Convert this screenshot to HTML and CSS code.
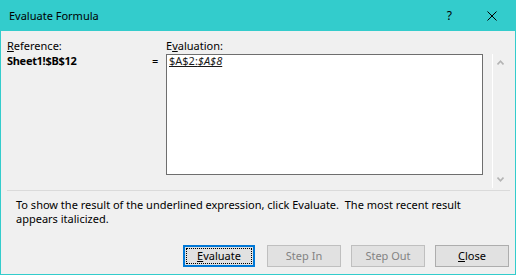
FILE: index.html
```html
<!DOCTYPE html>
<html>
<head>
<meta charset="utf-8">
<title>Evaluate Formula</title>
<link rel="stylesheet" href="styles.css">
</head>
<body>
<div class="window">
  <div class="titlebar">
    <span class="title">Evaluate Formula</span>
    <span class="help">?</span>
    <svg class="close" width="10" height="10" viewBox="0 0 10 10"><path d="M0.5 0.5 L9.5 9.5 M9.5 0.5 L0.5 9.5" stroke="#000" stroke-width="1" fill="none"/></svg>
  </div>
  <div class="content">
    <div class="top">
      <div class="refcol">
        <div class="label"><u>R</u>eference:</div>
        <div class="refval">Sheet1!$B$12</div>
      </div>
      <div class="eq">=</div>
      <div class="evalcol">
        <div class="label">E<u>v</u>aluation:</div>
        <div class="evalbox"><span class="expr">$A$2:<i>$A$8</i></span></div>
      </div>
      <div class="scroll">
        <svg class="arrow" width="7" height="5" viewBox="0 0 7 5"><path d="M0.5 4.5 L3.5 1.2 L6.5 4.5" stroke="#b4b4b4" stroke-width="1.6" fill="none"/></svg>
        <svg class="arrow" width="7" height="5" viewBox="0 0 7 5"><path d="M0.5 0.5 L3.5 3.8 L6.5 0.5" stroke="#b4b4b4" stroke-width="1.6" fill="none"/></svg>
      </div>
    </div>
    <div class="sep"></div>
    <p class="hint">To show the result of the underlined expression, click Evaluate.&nbsp; The most recent result<br>appears italicized.</p>
    <div class="buttons">
      <button class="btn default"><u>E</u>valuate</button>
      <button class="btn disabled">Step In</button>
      <button class="btn disabled">Step Out</button>
      <button class="btn"><u>C</u>lose</button>
    </div>
  </div>
</div>
</body>
</html>
```

FILE: styles.css
```css
html, body {
  margin: 0;
  padding: 0;
  background: #ffffff;
}
body {
  font-family: "Noto Sans", "Open Sans", sans-serif;
  font-size: 11px;
  color: #000;
}
.window {
  width: 516px;
  height: 275px;
  box-sizing: border-box;
  border: 1px solid #33cccc;
  border-top: none;
  background: #f0f0f0;
  display: flex;
  flex-direction: column;
}
.titlebar {
  height: 31px;
  margin: 0 -1px;
  background: #33cccc;
  display: flex;
  align-items: center;
  padding-left: 9px;
  padding-right: 19px;
  line-height: 31px;
}
.title {
  flex: 1;
  font-size: 11px;
}
.help {
  font-size: 12px;
  margin-right: 35px;
  line-height: 31px;
}
.close {
  display: block;
  margin-top: 0px;
}
.content {
  flex: 1;
  display: flex;
  flex-direction: column;
}
.top {
  display: flex;
  align-items: flex-start;
  padding-top: 7px;
  padding-left: 6px;
  padding-right: 5px;
  height: 150px;
}
.label {
  line-height: 16px;
  white-space: nowrap;
}
.refcol {
  width: 145px;
}
.refval {
  font-weight: 700;
  line-height: 13px;
  letter-spacing: -0.3px;
  white-space: nowrap;
}
.eq {
  width: 14px;
  padding-top: 16px;
  line-height: 13px;
}
.evalcol {
  width: 317px;
}
.evalbox {
  box-sizing: border-box;
  height: 121px;
  border: 1px solid #6e6e6e;
  background: #ffffff;
  padding-left: 2px;
  line-height: 12px;
  color: #1a1a1a;
}
.expr {
  text-decoration: underline;
}
.scroll {
  box-sizing: border-box;
  margin-top: 16px;
  margin-left: 9px;
  width: 17px;
  height: 134px;
  border-left: 1px solid #ffffff;
  display: flex;
  flex-direction: column;
  justify-content: space-between;
  padding: 6px 0 6px 4px;
}
.arrow {
  display: block;
}
.sep {
  height: 1px;
  background: #dadada;
  margin: 2px 5px 0 6px;
}
.hint {
  margin: 7px 0 0 0;
  padding-left: 15px;
  line-height: 13.5px;
  white-space: nowrap;
}
.buttons {
  display: flex;
  justify-content: flex-end;
  gap: 10px;
  margin-top: 20px;
  padding-right: 6px;
}
.btn {
  position: relative;
  box-sizing: border-box;
  width: 74px;
  height: 22px;
  margin: 0;
  padding: 0;
  border: 1px solid #adadad;
  background: #e1e1e1;
  font-family: "Noto Sans", "Open Sans", sans-serif;
  font-size: 11px;
  line-height: 20px;
  color: #000;
}
.btn.default {
  width: 72px;
  margin-right: 2px;
  border: 2px solid #0078d7;
  line-height: 18px;
}
.btn.default::after {
  content: "";
  position: absolute;
  top: 1px;
  left: 1px;
  right: 1px;
  bottom: 1px;
  border: 1px dotted #000;
}
.btn.disabled {
  border-color: #bfbfbf;
  color: #838383;
}
```
